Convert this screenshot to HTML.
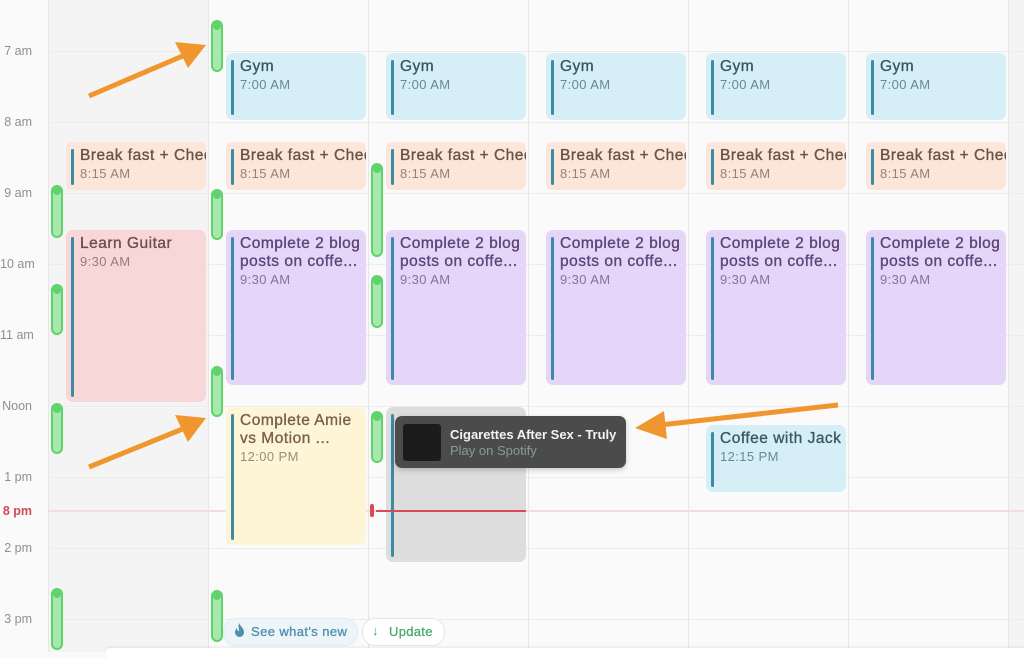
<!DOCTYPE html><html><head><style>
body{margin:0;width:1024px;height:652px;overflow:hidden;background:#fafafa;font-family:"Liberation Sans",sans-serif;position:relative}
.a{position:absolute}
.hl{position:absolute;left:48px;right:0;height:1px;background:#ececec}
.vl{position:absolute;top:0;bottom:0;width:1px;background:#e6e6e6}
.t{position:absolute;left:0;width:32px;text-align:right;font-size:12.5px;color:#8f8f8f;white-space:nowrap}
.ev{position:absolute;border-radius:7px;overflow:hidden;white-space:nowrap}
.ev .b{position:absolute;left:5px;top:7px;bottom:5px;width:3px;border-radius:2px;background:#3a8aa8}
.ev .ti{position:absolute;left:14px;top:5px;font-size:15.5px;line-height:18px;letter-spacing:0.5px;-webkit-text-stroke:0.35px currentColor}
.ev .tm{font-size:13px;line-height:18px;display:block;letter-spacing:0.4px;-webkit-text-stroke:0}
.g{position:absolute;width:8px;border:2px solid #5fd36a;background:#a8e8ae;border-radius:7px}
.g:before{content:"";position:absolute;left:0;top:0;width:8px;height:8px;border-radius:50%;background:#5fd36a}
</style></head><body>
<div class="a" style="left:48px;top:0;width:160px;height:652px;background:#f4f4f4"></div>
<div class="a" style="left:1008px;top:0;width:16px;height:652px;background:#f4f4f4"></div>
<div class="vl" style="left:48px"></div><div class="vl" style="left:208px"></div><div class="vl" style="left:368px"></div><div class="vl" style="left:528px"></div><div class="vl" style="left:688px"></div><div class="vl" style="left:848px"></div><div class="vl" style="left:1008px"></div>
<div class="hl" style="top:51px"></div><div class="hl" style="top:122px"></div><div class="hl" style="top:193px"></div><div class="hl" style="top:264px"></div><div class="hl" style="top:335px"></div><div class="hl" style="top:406px"></div><div class="hl" style="top:477px"></div><div class="hl" style="top:548px"></div><div class="hl" style="top:619px"></div>
<div class="t" style="top:44px">7 am</div><div class="t" style="top:115px">8 am</div><div class="t" style="top:186px">9 am</div><div class="t" style="top:257px">10 am</div><div class="t" style="top:328px">11 am</div><div class="t" style="top:399px">Noon</div><div class="t" style="top:470px">1 pm</div><div class="t" style="top:504px;color:#d24a55;font-weight:bold">8 pm</div><div class="t" style="top:541px">2 pm</div><div class="t" style="top:612px">3 pm</div>
<div class="a" style="left:48px;right:0;top:510px;height:2px;background:#f8d9dc"></div>

<div class="ev" style="left:226px;top:53px;width:140px;height:67px;background:#d6eef6;color:#3c5866"><div class="b"></div><div class="ti">Gym<span class="tm" style="color:#6c8794">7:00 AM</span></div></div>
<div class="ev" style="left:386px;top:53px;width:140px;height:67px;background:#d6eef6;color:#3c5866"><div class="b"></div><div class="ti">Gym<span class="tm" style="color:#6c8794">7:00 AM</span></div></div>
<div class="ev" style="left:546px;top:53px;width:140px;height:67px;background:#d6eef6;color:#3c5866"><div class="b"></div><div class="ti">Gym<span class="tm" style="color:#6c8794">7:00 AM</span></div></div>
<div class="ev" style="left:706px;top:53px;width:140px;height:67px;background:#d6eef6;color:#3c5866"><div class="b"></div><div class="ti">Gym<span class="tm" style="color:#6c8794">7:00 AM</span></div></div>
<div class="ev" style="left:866px;top:53px;width:140px;height:67px;background:#d6eef6;color:#3c5866"><div class="b"></div><div class="ti">Gym<span class="tm" style="color:#6c8794">7:00 AM</span></div></div>
<div class="ev" style="left:66px;top:142px;width:140px;height:48px;background:#fce6da;color:#6b5245"><div class="b"></div><div class="ti">Break fast + Check<span class="tm" style="color:#9b8072">8:15 AM</span></div></div>
<div class="ev" style="left:226px;top:142px;width:140px;height:48px;background:#fce6da;color:#6b5245"><div class="b"></div><div class="ti">Break fast + Check<span class="tm" style="color:#9b8072">8:15 AM</span></div></div>
<div class="ev" style="left:386px;top:142px;width:140px;height:48px;background:#fce6da;color:#6b5245"><div class="b"></div><div class="ti">Break fast + Check<span class="tm" style="color:#9b8072">8:15 AM</span></div></div>
<div class="ev" style="left:546px;top:142px;width:140px;height:48px;background:#fce6da;color:#6b5245"><div class="b"></div><div class="ti">Break fast + Check<span class="tm" style="color:#9b8072">8:15 AM</span></div></div>
<div class="ev" style="left:706px;top:142px;width:140px;height:48px;background:#fce6da;color:#6b5245"><div class="b"></div><div class="ti">Break fast + Check<span class="tm" style="color:#9b8072">8:15 AM</span></div></div>
<div class="ev" style="left:866px;top:142px;width:140px;height:48px;background:#fce6da;color:#6b5245"><div class="b"></div><div class="ti">Break fast + Check<span class="tm" style="color:#9b8072">8:15 AM</span></div></div>
<div class="ev" style="left:66px;top:230px;width:140px;height:172px;background:#f7d7d8;color:#6b5048"><div class="b"></div><div class="ti">Learn Guitar<span class="tm" style="color:#9b7c72">9:30 AM</span></div></div>
<div class="ev" style="left:226px;top:230px;width:140px;height:155px;background:#e5d6f9;color:#5a4478"><div class="b"></div><div class="ti">Complete 2 blog<br>posts on coffe...<span class="tm" style="color:#85739b">9:30 AM</span></div></div>
<div class="ev" style="left:386px;top:230px;width:140px;height:155px;background:#e5d6f9;color:#5a4478"><div class="b"></div><div class="ti">Complete 2 blog<br>posts on coffe...<span class="tm" style="color:#85739b">9:30 AM</span></div></div>
<div class="ev" style="left:546px;top:230px;width:140px;height:155px;background:#e5d6f9;color:#5a4478"><div class="b"></div><div class="ti">Complete 2 blog<br>posts on coffe...<span class="tm" style="color:#85739b">9:30 AM</span></div></div>
<div class="ev" style="left:706px;top:230px;width:140px;height:155px;background:#e5d6f9;color:#5a4478"><div class="b"></div><div class="ti">Complete 2 blog<br>posts on coffe...<span class="tm" style="color:#85739b">9:30 AM</span></div></div>
<div class="ev" style="left:866px;top:230px;width:140px;height:155px;background:#e5d6f9;color:#5a4478"><div class="b"></div><div class="ti">Complete 2 blog<br>posts on coffe...<span class="tm" style="color:#85739b">9:30 AM</span></div></div>
<div class="ev" style="left:226px;top:407px;width:140px;height:138px;background:#fdf5d6;color:#7a5e4e"><div class="b"></div><div class="ti">Complete Amie<br>vs Motion ...<span class="tm" style="color:#a08a78">12:00 PM</span></div></div>
<div class="ev" style="left:386px;top:407px;width:140px;height:155px;background:#dcdddc"><div class="b"></div></div>
<div class="ev" style="left:706px;top:425px;width:140px;height:67px;background:#d6eef6;color:#3c5866"><div class="b"></div><div class="ti">Coffee with Jack<span class="tm" style="color:#6c8794">12:15 PM</span></div></div>
<div class="a" style="left:370px;top:504px;width:4px;height:13px;background:#d94a58;border-radius:2px"></div>
<div class="a" style="left:376px;top:510px;width:150px;height:2px;background:#d94a58"></div>
<div class="g" style="left:211px;top:20px;height:48px"></div>
<div class="g" style="left:51px;top:185px;height:49px"></div>
<div class="g" style="left:51px;top:284px;height:47px"></div>
<div class="g" style="left:51px;top:403px;height:47px"></div>
<div class="g" style="left:51px;top:588px;height:58px"></div>
<div class="g" style="left:211px;top:189px;height:47px"></div>
<div class="g" style="left:211px;top:366px;height:47px"></div>
<div class="g" style="left:211px;top:590px;height:48px"></div>
<div class="g" style="left:371px;top:163px;height:90px"></div>
<div class="g" style="left:371px;top:275px;height:49px"></div>
<div class="g" style="left:371px;top:411px;height:48px"></div>
<div class="a" style="left:395px;top:416px;width:231px;height:52px;background:#4b4b4b;border-radius:7px;box-shadow:0 2px 6px rgba(0,0,0,.2)"></div>
<div class="a" style="left:403px;top:424px;width:38px;height:37px;background:#1c1c1c;border-radius:3px"></div>
<div class="a" style="left:450px;top:427px;font-size:13px;font-weight:bold;color:#f2f2f2;white-space:nowrap">Cigarettes After Sex - Truly</div>
<div class="a" style="left:450px;top:443px;font-size:13px;color:#8a9a9a">Play on Spotify</div>
<div class="a" style="left:223px;top:618px;width:133px;height:26px;border-radius:13px;background:#eef5f8;border:1px solid #e3ecef"></div>
<svg class="a" style="left:233px;top:623px" width="13" height="15" viewBox="0 0 13 15"><path d="M6 0C7 3 11 5 11 9.5A4.5 4.5 0 0 1 2 9.5C2 7.5 3 6 4 5C4 7 5 8 6 8C6 5 5 3 6 0Z" fill="#4f8fb0"/></svg>
<div class="a" style="left:251px;top:624px;font-size:13px;color:#4f8fb0;letter-spacing:0.4px;-webkit-text-stroke:0.3px #4f8fb0">See what's new</div>
<div class="a" style="left:362px;top:618px;width:81px;height:26px;border-radius:13px;background:#fff;border:1px solid #e6e6e6"></div>
<div class="a" style="left:372px;top:623px;font-size:13px;color:#4ca96a;font-weight:bold">↓</div>
<div class="a" style="left:389px;top:624px;font-size:13px;color:#4ca96a;letter-spacing:0.3px;-webkit-text-stroke:0.3px #4ca96a">Update</div>
<div class="a" style="left:105px;top:648px;width:1000px;height:10px;background:#fff;border-radius:8px;box-shadow:0 -1px 3px rgba(0,0,0,.08)"></div>
<svg class="a" style="left:0;top:0" width="1024" height="652">
<g fill="#f0962f" stroke="#f0962f" stroke-width="5">
<line x1="89" y1="96" x2="185" y2="55"/><polygon points="206,45 175,42 188,68" stroke="none"/>
<line x1="89" y1="467" x2="185" y2="428"/><polygon points="206,418 175,415 188,442" stroke="none"/>
<line x1="838" y1="405" x2="660" y2="425"/><polygon points="635,428 664,411 667,439" stroke="none"/>
</g></svg>
</body></html>
